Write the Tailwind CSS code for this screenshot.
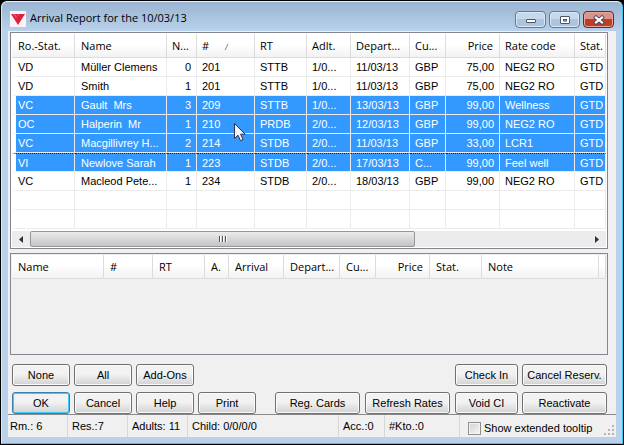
<!DOCTYPE html>
<html lang="en">
<head>
<meta charset="utf-8">
<title>Arrival Report</title>
<script src="https://cdn.jsdelivr.net/npm/@tailwindcss/browser@4"></script>
</head>
<body class="h-screen overflow-hidden bg-black font-['Liberation_Sans',Arial,sans-serif] text-[11px] text-black">
<div class="flex h-full flex-col p-px">
<main class="flex min-h-0 flex-1 flex-col rounded-t-md border border-t-[#e8f0fa] border-r-[#35c9f2] border-b-[#35c9f2] border-l-[#dce8f5] bg-[#b9d1ea] px-1.5 pb-1.5">
  <header class="-mx-1.5 flex h-[29px] shrink-0 items-center rounded-t-md bg-linear-to-b from-[#9ab4d2] to-[#b9d1ea] pr-2 pl-2">
    <svg class="mt-1 h-4 w-4" viewBox="0 0 16 16" aria-hidden="true"><path fill="#f8f4f8" d="M0 0h16v16H0z"/><path fill="#e0203c" d="M1 3h14L8 14z"/><path fill="#fff" d="M3 3l3 4 1-1-2-3zM7 3l1 2 1-2z" opacity=".25"/></svg>
    <h1 class="mt-1 ml-1 flex-1 font-['Open_Sans','Noto_Sans',sans-serif] text-[11px]">Arrival Report for the 10/03/13</h1>
    <div class="mt-1.5 flex gap-[3px]">
      <button aria-label="Minimize" class="flex h-[17px] w-[31px] items-center justify-center rounded-sm border border-[#65788f] bg-linear-to-b from-[#c6d8eb] from-50% to-[#adc4de] to-50% shadow-[inset_0_0_0_1px_#dce8f5]"><svg class="h-3 w-3" viewBox="0 0 12 12"><rect x="1.5" y="5.5" width="9" height="3" rx=".5" fill="#fff" stroke="#4d5666"/></svg></button>
      <button aria-label="Maximize" class="flex h-[17px] w-[31px] items-center justify-center rounded-sm border border-[#65788f] bg-linear-to-b from-[#c6d8eb] from-50% to-[#adc4de] to-50% shadow-[inset_0_0_0_1px_#dce8f5]"><svg class="h-3 w-3" viewBox="0 0 12 12"><rect x="1.5" y="2.5" width="9" height="7" rx=".5" fill="#fff" stroke="#4d5666"/><rect x="4.5" y="5.5" width="3" height="1.5" fill="#b9d1ea" stroke="#4d5666"/></svg></button>
      <button aria-label="Close" class="flex h-[17px] w-[31px] items-center justify-center rounded-sm border border-[#5e2b2b] bg-linear-to-b from-[#d9958a] from-50% to-[#c03c28] to-50% shadow-[inset_0_0_0_1px_#e8a89c]"><svg class="h-3 w-3" viewBox="0 0 12 12"><path d="M3 3.5l6 5M9 3.5l-6 5" stroke="#4d4a5a" stroke-width="4" stroke-linecap="square"/><path d="M3 3.5l6 5M9 3.5l-6 5" stroke="#fff" stroke-width="2.2" stroke-linecap="square"/></svg></button>
    </div>
  </header>

  <div class="flex min-h-0 flex-1 flex-col bg-[#f0f0f0]">
    <section class="mt-px mr-2 ml-0.5 flex flex-col border border-[#828790] bg-white p-px">
      <table class="w-full table-fixed border-separate border-spacing-0 leading-4 whitespace-nowrap [&_td]:h-[19px] [&_td]:overflow-hidden [&_td]:border-r [&_td]:border-b [&_td]:border-[#ebebeb] [&_td]:pl-[5px] [&_td:first-child]:border-l-4 [&_td:first-child]:border-l-white [&_td:first-child]:pl-0.5 [&_td:nth-child(2)]:pl-1.5 [&_td:nth-child(3)]:pr-[5px] [&_td:nth-child(3)]:text-right [&_td:nth-child(9)]:pr-[5px] [&_td:nth-child(9)]:text-right">
        <colgroup><col class="w-[63px]"><col class="w-[92px]"><col class="w-[30px]"><col class="w-[58px]"><col class="w-[52px]"><col class="w-[44px]"><col class="w-[59px]"><col class="w-[36px]"><col class="w-[54px]"><col class="w-[75px]"><col></colgroup>
        <thead class="font-['Open_Sans','Noto_Sans',sans-serif] [&_th]:h-[24px] [&_th]:overflow-hidden [&_th]:border-r [&_th]:border-b [&_th]:border-[#dcdcdc] [&_th]:bg-linear-to-b [&_th]:from-white [&_th]:from-45% [&_th]:to-[#f2f2f3] [&_th]:pl-[5px] [&_th]:text-left [&_th]:font-normal [&_th:first-child]:pl-1.5 [&_th:nth-child(2)]:pl-1.5">
          <tr><th>Ro.-Stat.</th><th>Name</th><th>N...</th><th>#<svg class="ml-3.5 inline h-2 w-2" viewBox="0 0 8 8" aria-hidden="true"><path d="M2 7l3-6" fill="none" stroke="#888"/></svg></th><th>RT</th><th>Adlt.</th><th>Depart...</th><th>Cu...</th><th><span class="block pr-1.5 text-right">Price</span></th><th>Rate code</th><th>Stat.</th></tr>
        </thead>
        <tbody>
          <tr><td>VD</td><td>Müller Clemens</td><td>0</td><td>201</td><td>STTB</td><td>1/0...</td><td>11/03/13</td><td>GBP</td><td>75,00</td><td>NEG2 RO</td><td>GTD</td></tr>
          <tr><td>VD</td><td>Smith</td><td>1</td><td>201</td><td>STTB</td><td>1/0...</td><td>11/03/13</td><td>GBP</td><td>75,00</td><td>NEG2 RO</td><td>GTD</td></tr>
          <tr class="bg-[#3399ff] text-white"><td>VC</td><td>Gault&nbsp; Mrs</td><td>3</td><td>209</td><td>STTB</td><td>1/0...</td><td>13/03/13</td><td>GBP</td><td>99,00</td><td>Wellness</td><td>GTD</td></tr>
          <tr class="bg-[#3399ff] text-white"><td>OC</td><td>Halperin&nbsp; Mr</td><td>1</td><td>210</td><td>PRDB</td><td>2/0...</td><td>12/03/13</td><td>GBP</td><td>99,00</td><td>NEG2 RO</td><td>GTD</td></tr>
          <tr class="bg-[#3399ff] text-white"><td>VC</td><td>Macgillivrey H...</td><td>2</td><td>214</td><td>STDB</td><td>2/0...</td><td>11/03/13</td><td>GBP</td><td>33,00</td><td>LCR1</td><td>GTD</td></tr>
          <tr class="bg-[#3399ff] text-white [&>td]:border-t [&>td]:border-t-[#222]! [&>td]:[border-top-style:dotted]"><td>VI</td><td>Newlove Sarah</td><td>1</td><td>223</td><td>STDB</td><td>2/0...</td><td>17/03/13</td><td>C...</td><td>99,00</td><td>Feel well</td><td>GTD</td></tr>
          <tr><td>VC</td><td>Macleod Pete...</td><td>1</td><td>234</td><td>STDB</td><td>2/0...</td><td>18/03/13</td><td>GBP</td><td>99,00</td><td>NEG2 RO</td><td>GTD</td></tr>
          <tr><td></td><td></td><td></td><td></td><td></td><td></td><td></td><td></td><td></td><td></td><td></td></tr>
          <tr><td></td><td></td><td></td><td></td><td></td><td></td><td></td><td></td><td></td><td></td><td></td></tr>
        </tbody>
      </table>
      <div class="mt-0.5 flex h-4 items-stretch bg-[#ececec]">
        <button aria-label="Scroll left" class="flex w-[18px] items-center justify-center"><svg class="h-[7px] w-1" viewBox="0 0 4 7"><path d="M4 0v7L0 3.500z" fill="#333"/></svg></button>
        <div class="flex flex-1"><div class="flex w-[69%] items-center justify-center gap-px rounded-xs border border-[#979797] bg-linear-to-b from-[#ececec] to-[#c4c4c4]"><i class="h-1.5 w-0.5 border-r border-white bg-[#555]"></i><i class="h-1.5 w-0.5 border-r border-white bg-[#555]"></i><i class="h-1.5 w-0.5 border-r border-white bg-[#555]"></i></div></div>
        <button aria-label="Scroll right" class="flex w-[18px] items-center justify-center"><svg class="h-[7px] w-1" viewBox="0 0 4 7"><path d="M0 0v7l4-3.500z" fill="#333"/></svg></button>
      </div>
    </section>

    <section class="mt-1 mr-2 ml-0.5 min-h-0 flex-1 border border-[#828790] p-px">
      <table class="w-full table-fixed border-separate border-spacing-0 font-['Open_Sans','Noto_Sans',sans-serif] leading-4 whitespace-nowrap [&_th]:h-[24px] [&_th]:overflow-hidden [&_th]:border-r [&_th]:border-b [&_th]:border-[#dcdcdc] [&_th]:bg-linear-to-b [&_th]:from-white [&_th]:from-45% [&_th]:to-[#f2f2f3] [&_th]:pl-1.5 [&_th]:text-left [&_th]:font-normal">
        <colgroup><col class="w-[92px]"><col class="w-[49px]"><col class="w-[52px]"><col class="w-[24px]"><col class="w-[55px]"><col class="w-[56px]"><col class="w-[36px]"><col class="w-[54px]"><col class="w-[52px]"><col><col class="w-[7px]"></colgroup>
        <thead><tr><th>Name</th><th>#</th><th>RT</th><th>A.</th><th>Arrival</th><th>Depart...</th><th>Cu...</th><th><span class="block pr-1.5 text-right">Price</span></th><th>Stat.</th><th>Note</th><th></th></tr></thead>
      </table>
    </section>

    <section class="mt-[9px] mr-[9px] ml-1 flex shrink-0 flex-col gap-1.5 [&_button]:h-[22px] [&_button]:rounded-[3px] [&_button]:border [&_button]:border-[#707070] [&_button]:bg-linear-to-b [&_button]:from-[#f2f2f2] [&_button]:from-45% [&_button]:to-[#d2d2d2] [&_button]:whitespace-nowrap [&_button]:shadow-[inset_0_0_0_1px_#fbfbfb]">
      <div class="flex gap-1">
        <button class="w-[58px]">None</button><button class="w-[58px]">All</button><button class="w-[58px]">Add-Ons</button>
        <span class="flex-1"></span>
        <button class="w-[63px]">Check In</button><button class="w-[85px]">Cancel Reserv.</button>
      </div>
      <div class="flex gap-1">
        <button class="w-[58px] border-[#3c7fb1]! shadow-[inset_0_0_0_1px_#3fc8f5]!">OK</button><button class="w-[58px]">Cancel</button><button class="w-[58px]">Help</button><button class="w-[58px]">Print</button>
        <span class="flex-1"></span>
        <button class="mr-px w-[85px]">Reg. Cards</button><button class="mr-px w-[85px]">Refresh Rates</button><button class="w-[63px]">Void CI</button><button class="w-[85px]">Reactivate</button>
      </div>
    </section>

    <footer class="flex h-[23px] shrink-0 items-stretch border-t border-[#8a8a8a] leading-[22px] whitespace-nowrap [&>span]:border-r [&>span]:border-[#d7d7d7] [&>span]:pl-1">
      <span class="w-[60px] pl-0.5!">Rm.: 6</span><span class="w-[60px]">Res.:7</span><span class="w-[60px]">Adults: 11</span><span class="flex-1">Child: 0/0/0/0</span><span class="w-[46px]">Acc.:0</span><span class="w-[75px]">#Kto.:0</span>
      <label class="flex w-[156px] items-center pt-1 pl-2"><input type="checkbox" class="mr-[3px] h-[13px] w-[13px] appearance-none border border-[#8e8f8f] bg-linear-to-br from-[#cfd3d8] to-[#f6f6f6] shadow-[inset_0_0_0_1px_#f4f4f4]">Show extended tooltip
        <svg class="mt-1 ml-auto h-3 w-3" viewBox="0 0 12 12" fill="#b5b5b5" aria-hidden="true"><path d="M8 1h2v2H8zM8 5h2v2H8zM8 9h2v2H8zM4 5h2v2H4zM4 9h2v2H4zM0 9h2v2H0z"/></svg></label>
    </footer>
  </div>
</main>
</div>
<svg class="pointer-events-none absolute top-[122px] left-[233px] h-5 w-3.5" viewBox="0 0 14 20" aria-hidden="true"><path d="M1.500 1.500v15l3.500-3.300 2.500 5.600 2.600-1.200-2.500-5.400h4.600z" fill="#f4f4f8" stroke="#2a3550"/></svg>
</body>
</html>
